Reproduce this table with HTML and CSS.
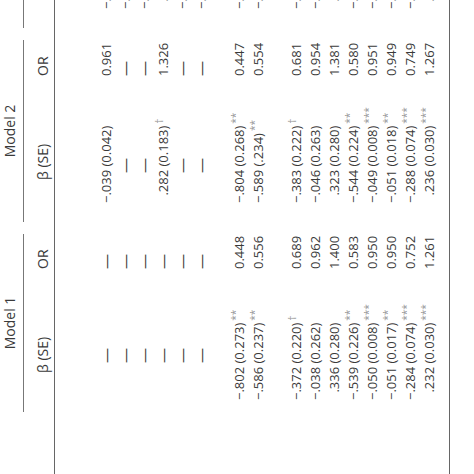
FILE: index.html
```html
<!DOCTYPE html>
<html>
<head>
<meta charset="utf-8">
<link rel="stylesheet" href="styles.css">
</head>
<body>
<div class="sheet">
  <div class="table">
    <div class="row models">
      <div></div>
      <div class="model"><div class="mline">Model 1</div></div>
      <div class="model"><div class="mline">Model 2</div></div>
      <div class="model"><div class="mline">Model 3</div></div>
    </div>
    <div class="row cols">
      <div></div>
      <div class="hb1">β (SE)</div><div class="or">OR</div>
      <div class="hb2">β (SE)</div><div class="or">OR</div>
      <div class="hb2">β (SE)</div><div class="or">OR</div>
    </div>
    <div class="body">
      <div class="row"><div></div><div class="d">—</div><div class="or dash">—</div><div class="v2">−.039 (0.042)</div><div class="or">0.961</div><div class="v2">−.041 (0.043)</div><div></div></div>
      <div class="row"><div></div><div class="d">—</div><div class="or dash">—</div><div class="d">—</div><div class="or dash">—</div><div class="v2">−.112 (0.201)</div><div></div></div>
      <div class="row"><div></div><div class="d">—</div><div class="or dash">—</div><div class="d">—</div><div class="or dash">—</div><div class="v2">−.095 (0.188)</div><div></div></div>
      <div class="row"><div></div><div class="d">—</div><div class="or dash">—</div><div class="v2"><span class="ghost">−</span>.282 (0.183)<span class="sig">†</span></div><div class="or">1.326</div><div class="v2"><span class="ghost">−</span>.301 (0.185)</div><div></div></div>
      <div class="row"><div></div><div class="d">—</div><div class="or dash">—</div><div class="d">—</div><div class="or dash">—</div><div class="v2">−.067 (0.154)</div><div></div></div>
      <div class="row"><div></div><div class="d">—</div><div class="or dash">—</div><div class="d">—</div><div class="or dash">—</div><div class="v2">−.143 (0.219)</div><div></div></div>
      <div class="row"><div></div></div>
      <div class="row"><div></div><div class="v1">−.802 (0.273)<span class="sig">**</span></div><div class="or">0.448</div><div class="v2">−.804 (0.268)<span class="sig">**</span></div><div class="or">0.447</div><div class="v2">−.806 (0.269)</div><div></div></div>
      <div class="row"><div></div><div class="v1">−.586 (0.237)<span class="sig">**</span></div><div class="or">0.556</div><div class="v2">−.589 (.234)<span class="sig">**</span></div><div class="or">0.554</div><div class="v2">−.590 (0.235)</div><div></div></div>
      <div class="row"><div></div></div>
      <div class="row"><div></div><div class="v1">−.372 (0.220)<span class="sig">†</span></div><div class="or">0.689</div><div class="v2">−.383 (0.222)<span class="sig">†</span></div><div class="or">0.681</div><div class="v2">−.380 (0.223)</div><div></div></div>
      <div class="row"><div></div><div class="v1">−.038 (0.262)</div><div class="or">0.962</div><div class="v2">−.046 (0.263)</div><div class="or">0.954</div><div class="v2">−.044 (0.264)</div><div></div></div>
      <div class="row"><div></div><div class="v1"><span class="ghost">−</span>.336 (0.280)</div><div class="or">1.400</div><div class="v2"><span class="ghost">−</span>.323 (0.280)</div><div class="or">1.381</div><div class="v2"><span class="ghost">−</span>.320 (0.281)</div><div></div></div>
      <div class="row"><div></div><div class="v1">−.539 (0.226)<span class="sig">**</span></div><div class="or">0.583</div><div class="v2">−.544 (0.224)<span class="sig">**</span></div><div class="or">0.580</div><div class="v2">−.541 (0.225)</div><div></div></div>
      <div class="row"><div></div><div class="v1">−.050 (0.008)<span class="sig">***</span></div><div class="or">0.950</div><div class="v2">−.049 (0.008)<span class="sig">***</span></div><div class="or">0.951</div><div class="v2">−.049 (0.008)</div><div></div></div>
      <div class="row"><div></div><div class="v1">−.051 (0.017)<span class="sig">**</span></div><div class="or">0.950</div><div class="v2">−.051 (0.018)<span class="sig">**</span></div><div class="or">0.949</div><div class="v2">−.052 (0.018)</div><div></div></div>
      <div class="row"><div></div><div class="v1">−.284 (0.074)<span class="sig">***</span></div><div class="or">0.752</div><div class="v2">−.288 (0.074)<span class="sig">***</span></div><div class="or">0.749</div><div class="v2">−.287 (0.075)</div><div></div></div>
      <div class="row"><div></div><div class="v1"><span class="ghost">−</span>.232 (0.030)<span class="sig">***</span></div><div class="or">1.261</div><div class="v2"><span class="ghost">−</span>.236 (0.030)<span class="sig">***</span></div><div class="or">1.267</div><div class="v2"><span class="ghost">−</span>.235 (0.030)</div><div></div></div>
    </div>
  </div>
</div>
</body>
</html>
```

FILE: styles.css
```css
html, body {
  margin: 0;
  padding: 0;
  background: #ffffff;
}

.sheet {
  width: 474px;
  height: 474px;
  overflow: hidden;
  transform: rotate(-90deg);
  font-family: "Open Sans", "Liberation Sans", sans-serif;
  color: #3a3a3a;
}

.table {
  width: 640px;
}

.row {
  display: grid;
  grid-template-columns: 56px 104px 86px 107px 87px 106px 94px;
  white-space: nowrap;
  font-size: 13px;
  line-height: 19px;
  height: 19px;
}

.row > div {
  overflow: visible;
}

.models {
  height: 24px;
  font-size: 14px;
  line-height: 17px;
}

.model {
  grid-column: span 2;
}

.mline {
  margin: 0 6px;
  padding: 1px 0 5px;
  border-bottom: 1px solid #777777;
  text-align: center;
}

.cols {
  font-size: 14px;
  line-height: 17px;
  padding-top: 10px;
  box-sizing: border-box;
  height: 31px;
  border-bottom: 1px solid #666666;
}

.body {
  padding: 42px 0 10px;
  border-bottom: 1px solid #666666;
}

.hb1 { padding-left: 45px; }
.hb2 { padding-left: 48px; }
.or { padding-left: 45px; }
.d { padding-left: 55px; font-size: 15px; }
.dash { font-size: 15px; }
.v1 { padding-left: 18px; }
.v2 { padding-left: 25px; }

.ghost {
  visibility: hidden;
}

.sig {
  display: inline-block;
  width: 0;
  font-size: 10px;
  line-height: 9px;
  vertical-align: 5px;
  color: #9a9a9a;
  text-indent: 2px;
}
```
